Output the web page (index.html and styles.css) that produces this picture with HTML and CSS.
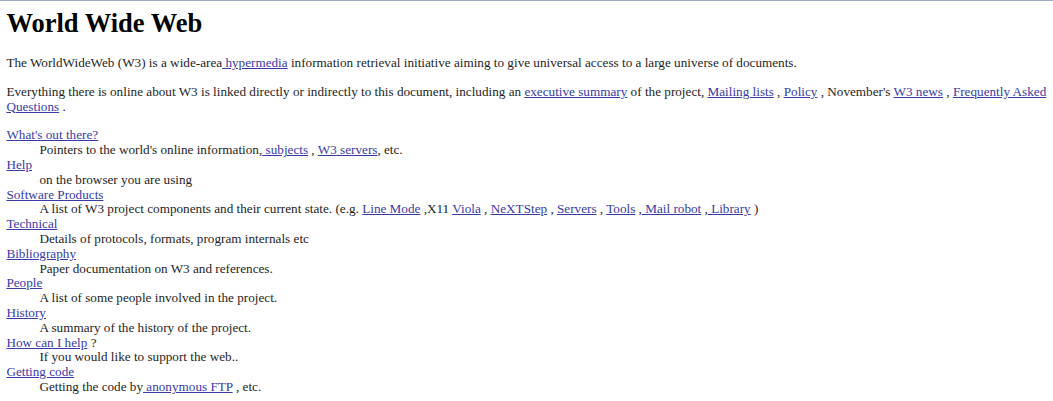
FILE: index.html
```html
<!DOCTYPE html>
<html>
<head>
<meta charset="utf-8">
<title>The World Wide Web project</title>
<link rel="stylesheet" href="styles.css">
</head>
<body class="page">
<h1 class="title">World Wide Web</h1>
<p class="para">The WorldWideWeb (W3) is a wide-area<a href="#"> hypermedia</a> information retrieval initiative aiming to give universal access to a large universe of documents.</p>
<p class="para">Everything there is online about W3 is linked directly or indirectly to this document, including an <a href="#">executive summary</a> of the project, <a href="#">Mailing lists</a> , <a href="#">Policy</a> , November's <a href="#">W3 news</a> , <a href="#">Frequently Asked Questions</a> .</p>
<dl class="list">
<dt><a href="#">What's out there?</a></dt>
<dd>Pointers to the world's online information,<a href="#"> subjects</a> , <a href="#">W3 servers</a>, etc.</dd>
<dt><a href="#">Help</a></dt>
<dd>on the browser you are using</dd>
<dt><a href="#">Software Products</a></dt>
<dd>A list of W3 project components and their current state. (e.g. <a href="#">Line Mode</a> ,X11 <a href="#">Viola</a> , <a href="#">NeXTStep</a> , <a href="#">Servers</a> , <a href="#">Tools</a> ,<a href="#"> Mail robot</a> ,<a href="#"> Library</a> )</dd>
<dt><a href="#">Technical</a></dt>
<dd>Details of protocols, formats, program internals etc</dd>
<dt><a href="#">Bibliography</a></dt>
<dd>Paper documentation on W3 and references.</dd>
<dt><a href="#">People</a></dt>
<dd>A list of some people involved in the project.</dd>
<dt><a href="#">History</a></dt>
<dd>A summary of the history of the project.</dd>
<dt><a href="#">How can I help</a> ?</dt>
<dd>If you would like to support the web..</dd>
<dt><a href="#">Getting code</a></dt>
<dd>Getting the code by<a href="#"> anonymous FTP</a> , etc.</dd>
</dl>
</body>
</html>
```

FILE: styles.css
```css
html {
  border-top: 1px solid #9eabc2;
  background: #fff;
}
.page {
  margin: 7px 6.4px 6px 6.4px;
  font-family: "Liberation Serif", "Times New Roman", serif;
  font-size: 13.2px;
  line-height: 14.8px;
  color: #1e1e1e;
}
.page a {
  color: #3a3aa8;
  text-decoration: underline;
}
.title {
  font-size: 26.5px;
  line-height: 30px;
  font-weight: bold;
  margin: 0 0 18px 0;
  color: #000;
}
.para {
  margin: 0 0 14px 0;
}
.list {
  margin: 12px 0 0 0;
}
.list dt {
  margin: 0;
}
.list dd {
  margin: 0 0 0 33px;
}
```
